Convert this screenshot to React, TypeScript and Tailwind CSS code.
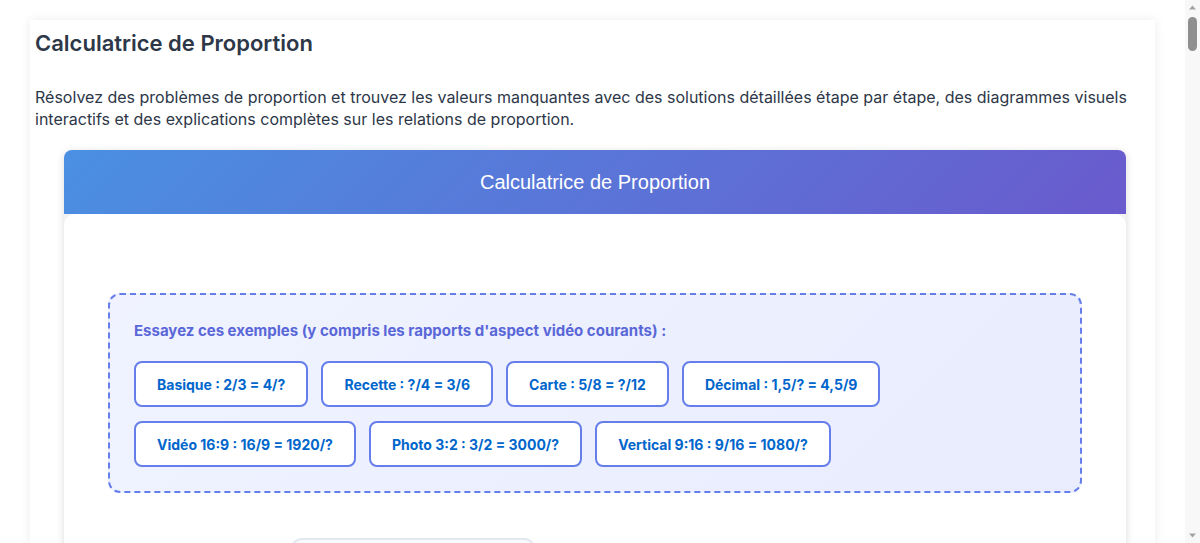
import React from 'react';

const examples = [
  'Basique : 2/3 = 4/?',
  'Recette : ?/4 = 3/6',
  'Carte : 5/8 = ?/12',
  'Décimal : 1,5/? = 4,5/9',
  'Vidéo 16:9 : 16/9 = 1920/?',
  'Photo 3:2 : 3/2 = 3000/?',
  'Vertical 9:16 : 9/16 = 1080/?',
];

// Browser scrollbar as it appears in the screenshot
const Scrollbar = () => (
  <div className="fixed right-0 top-0 h-screen w-[15px] bg-[#f8f8f8] flex flex-col items-center">
    <svg width="15" height="15" viewBox="0 0 15 15" className="shrink-0">
      <path d="M4 9.5 L7.5 5.5 L11 9.5 Z" fill="#a3a3a3" />
    </svg>
    <div className="mt-[2px] h-[34px] w-[9px] rounded-full bg-[#8f8f8f]" />
    <div className="flex-1" />
    <svg width="15" height="15" viewBox="0 0 15 15" className="shrink-0">
      <path d="M4 5.5 L7.5 9.5 L11 5.5 Z" fill="#a3a3a3" />
    </svg>
  </div>
);

export default function App() {
  return (
    <div className="min-h-screen bg-white font-['Inter',sans-serif] text-[#2d3748] pr-[15px]">
      <div className="pt-5 px-[30px] pb-10">
        <div className="bg-white shadow-[0_0_10px_rgba(0,0,0,0.08)] px-[5px] pt-[7px] pb-10">
          {/* Page header */}
          <h1 className="text-[22px] font-semibold leading-[32px] text-[#2d3748]">Calculatrice de Proportion</h1>
          <p className="mt-[27px] text-[16px] leading-[22px] text-[#2d3748]">
            Résolvez des problèmes de proportion et trouvez les valeurs manquantes avec des solutions détaillées étape par étape, des diagrammes visuels interactifs et des explications complètes sur les relations de proportion.
          </p>

          {/* Calculator */}
          <div className="mt-[20px] ml-[29px] w-[1062px] rounded-lg bg-[#f3f3f3] shadow-[0_2px_8px_rgba(0,0,0,0.15)]">
            <div className="h-[64px] rounded-t-lg bg-[linear-gradient(135deg,#4a90e2,#6a5acd)] flex items-center justify-center">
              <h2 className="font-['Liberation_Sans',Arial,sans-serif] text-[20px] text-white">Calculatrice de Proportion</h2>
            </div>
            <div className="rounded-t-xl bg-white px-[44px] pt-[79px] pb-10">
              <div className="rounded-xl border-2 border-dashed border-[#667eea] bg-[linear-gradient(135deg,#f0f3ff,#e8ecfd)] px-6 pt-[25px] pb-6">
                <div className="text-[15px] font-bold leading-[22px] text-[#5a67d8]">
                  Essayez ces exemples (y compris les rapports d'aspect vidéo courants) :
                </div>
                <div className="mt-[19px] flex flex-wrap gap-x-[13px] gap-y-[14px] w-[760px]">
                  {examples.map((label) => (
                    <button
                      key={label}
                      className="h-[46px] rounded-lg border-2 border-[#667eea] bg-white px-[21px] text-[14px] font-bold text-[#0066cc]"
                    >
                      {label}
                    </button>
                  ))}
                </div>
              </div>

              {/* Inputs */}
              <div className="mt-[45px] pl-[182px]">
                <div className="h-[52px] w-[246px] rounded-xl border-2 border-[#e2e8f0] bg-[#f8fafc]" />
              </div>
              <div className="h-[200px]" />
            </div>
          </div>
        </div>
      </div>
      <Scrollbar />
    </div>
  );
}
